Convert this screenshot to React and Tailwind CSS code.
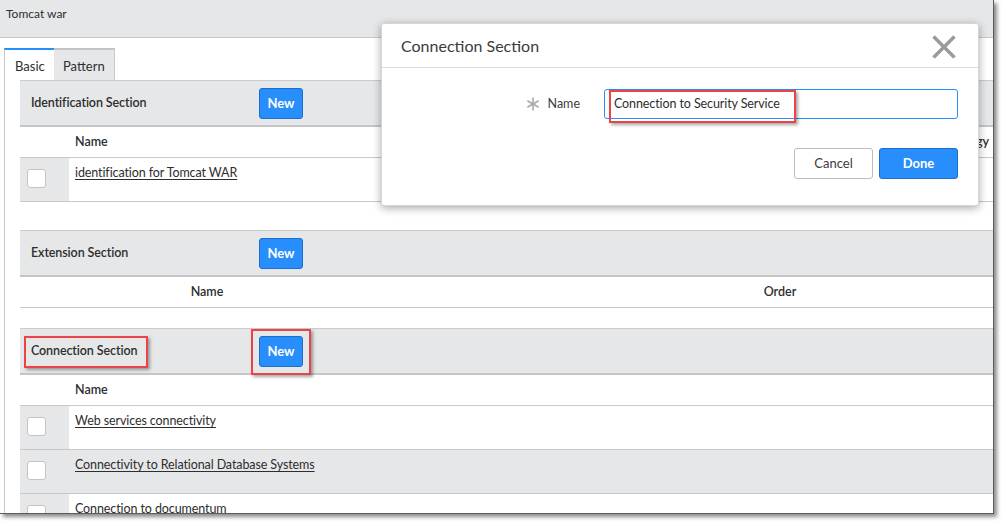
import React from 'react';

const Checkbox = () => (
  <div className="w-[19px] h-[19px] bg-white border border-[#c4c4c4] rounded-[3px]" />
);

const NewButton = () => (
  <button
    type="button"
    className="w-[44px] h-[31px] rounded-[3px] bg-[#278efc] border border-[#1c6fd0] text-white text-[13px] font-bold leading-none"
  >
    New
  </button>
);

const SectionHeader = ({ title }) => (
  <div className="flex items-center h-[47px] bg-[#e6e7e9] border-t border-[#cbcbcb] border-b-2 border-b-[#c4c5c7]">
    <div className="w-[239px] pl-[11px] text-[12.5px] tracking-[-0.1px] font-semibold text-[#2e2e2e]">{title}</div>
    <NewButton />
  </div>
);

const LinkRow = ({ label, shaded, underline = true }) => (
  <div className={`flex h-[44px] border-b border-[#c8c8c8] ${shaded ? 'bg-[#e6e7e9]' : 'bg-white'}`}>
    <div className="w-[49px] shrink-0 bg-[#e6e7e9] pl-[7px] pt-[11px]">
      <Checkbox />
    </div>
    <div className="pl-[6px] pt-[6px] text-[12.5px] tracking-[-0.1px] leading-[18px] text-[#2e2e2e]">
      <span className={underline ? 'underline underline-offset-2' : ''}>{label}</span>
    </div>
  </div>
);

const Asterisk = () => (
  <svg width="14" height="14" viewBox="0 0 14 14" className="shrink-0">
    <g stroke="#a9a9a9" strokeWidth="1.6">
      <line x1="7" y1="0.5" x2="7" y2="13.5" />
      <line x1="1.4" y1="3.75" x2="12.6" y2="10.25" />
      <line x1="1.4" y1="10.25" x2="12.6" y2="3.75" />
    </g>
  </svg>
);

const Modal = () => (
  <div className="absolute left-[381px] top-[23px] w-[598px] h-[183px] bg-white rounded-[3px] border border-[#d6d6d6] shadow-[0_2px_8px_rgba(0,0,0,0.35)]">
    <div className="flex items-center justify-between h-[44px] pl-[19px] pr-[22px] border-b border-[#dedede]">
      <span className="text-[16px] text-[#3b3b3b]">Connection Section</span>
      <svg width="24" height="24" viewBox="0 0 24 24" className="mt-[2px]">
        <g stroke="#9a9a9a" strokeWidth="3.4">
          <line x1="1.5" y1="1.5" x2="22.5" y2="22.5" />
          <line x1="22.5" y1="1.5" x2="1.5" y2="22.5" />
        </g>
      </svg>
    </div>
    <div className="flex items-center mt-[21px] pr-[20px]">
      <div className="flex items-center justify-end gap-[8px] w-[222px] pr-[24px] text-[12.5px] text-[#3b3b3b]">
        <Asterisk />
        <span>Name</span>
      </div>
      <div className="flex items-center w-[354px] h-[30px] border border-[#278efc] rounded-[3px] pl-[9px] text-[12.5px] tracking-[-0.1px] text-[#2e2e2e]">
        Connection to Security Service
      </div>
    </div>
    <div className="flex justify-end gap-[6px] mt-[29px] pr-[20px]">
      <button
        type="button"
        className="w-[79px] h-[31px] rounded-[3px] bg-white border border-[#bdbdbd] text-[13px] text-[#3b3b3b]"
      >
        Cancel
      </button>
      <button
        type="button"
        className="w-[79px] h-[31px] rounded-[3px] bg-[#278efc] border border-[#1c6fd0] text-[13px] font-bold text-white"
      >
        Done
      </button>
    </div>
  </div>
);

const RedBox = ({ className }) => (
  <div
    className={`absolute border-[2.5px] border-[#ec4446] shadow-[2px_2px_3px_rgba(0,0,0,0.35)] pointer-events-none ${className}`}
  />
);

export default function App() {
  return (
    <div className="w-[1007px] h-[528px] bg-white overflow-hidden font-['Lato',sans-serif] text-[#2e2e2e]">
      <div className="relative w-[994px] h-[514px] overflow-hidden bg-white border-r border-b border-[#5c5c5c] shadow-[3px_3px_4px_rgba(0,0,0,0.45)]">
        {/* title bar */}
        <div className="h-[38px] bg-[#e6e7e9] border-b border-[#c8c8c8] pl-[6px] pt-[6px] text-[12px] leading-[16px] text-[#2e2e2e]">
          Tomcat war
        </div>

        {/* tabs */}
        <div className="flex ml-[4px] mt-[10px] h-[32px]">
          <div className="w-[50px] border-l border-[#c8c8c8] border-t-[2px] border-t-[#278efc] pl-[10px] pt-[8px] text-[13px] leading-[16px]">
            Basic
          </div>
          <div className="w-[61px] bg-[#e6e7e9] border-t-[2px] border-t-[#c3c4c6] border-r border-[#c8c8c8] pl-[9px] pt-[8px] text-[13px] leading-[16px]">
            Pattern
          </div>
        </div>

        {/* tab panel */}
        <div className="ml-[4px] border-l border-[#c8c8c8] pl-[15px] h-[440px]">
          {/* Identification section */}
          <SectionHeader title="Identification Section" />
          <div className="flex h-[31px] border-b border-[#c8c8c8] bg-white text-[12.5px] font-semibold leading-[30px]">
            <div className="w-[49px] shrink-0" />
            <div className="w-[874px] shrink-0 pl-[6px]">Name</div>
            <div className="shrink-0">Strategy</div>
          </div>
          <LinkRow label="identification for Tomcat WAR" />

          {/* Extension section */}
          <div className="mt-[28px]">
            <SectionHeader title="Extension Section" />
            <div className="grid grid-cols-[374px_772px] h-[31px] border-b border-[#c8c8c8] text-[12.5px] font-semibold leading-[30px] text-center">
              <div>Name</div>
              <div>Order</div>
            </div>
          </div>

          {/* Connection section */}
          <div className="mt-[20px]">
            <SectionHeader title="Connection Section" />
            <div className="flex h-[31px] border-b border-[#c8c8c8] bg-white text-[12.5px] font-semibold leading-[30px]">
              <div className="w-[49px] shrink-0" />
              <div className="pl-[6px]">Name</div>
            </div>
            <LinkRow label="Web services connectivity" />
            <LinkRow label="Connectivity to Relational Database Systems" shaded />
            <LinkRow label="Connection to documentum" underline={false} />
          </div>
        </div>

        <Modal />

        {/* annotation highlights */}
        <RedBox className="left-[24px] top-[336px] w-[124px] h-[32px]" />
        <RedBox className="left-[251px] top-[329px] w-[60px] h-[46px]" />
        <RedBox className="left-[609px] top-[90px] w-[187px] h-[33px]" />
      </div>
    </div>
  );
}
